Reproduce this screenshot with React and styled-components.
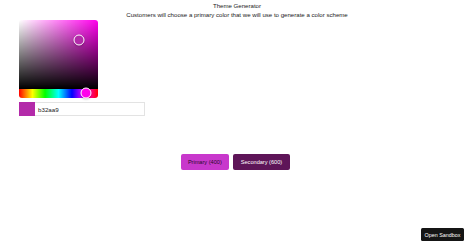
import React from "react";
import styled, { createGlobalStyle } from "styled-components";

const Global = createGlobalStyle`
  html, body { margin: 0; padding: 0; background: #fff; }
  body { font-family: "Liberation Sans", Arial, sans-serif; color: #111; }
`;

const Page = styled.div`
  display: flex;
  flex-direction: column;
  min-height: 248px;
  box-sizing: border-box;
  padding-top: 0.5px;
`;

const Title = styled.div`
  text-align: center;
  font-size: 6.1px;
  line-height: 9px;
  color: #1a1a1a;
`;

const Subtitle = styled(Title)``;

const PickerArea = styled.div`
  display: flex;
  flex-direction: column;
  align-items: flex-start;
  gap: 4px;
  margin: 1px 0 0 19px;
`;

const Picker = styled.div`
  position: relative;
  display: flex;
  flex-direction: column;
  width: 79px;
`;

const Saturation = styled.div`
  position: relative;
  height: 69px;
  border-radius: 3px 3px 0 0;
  background:
    linear-gradient(to top, #000, rgba(0, 0, 0, 0)),
    linear-gradient(to right, #fff, rgba(255, 255, 255, 0)),
    ${(p) => p.$hueColor};
  box-shadow: inset 0 -5px 5px -5px rgba(0, 0, 0, 0.05);
`;

const Hue = styled.div`
  position: relative;
  height: 9.5px;
  border-radius: 0 0 3px 3px;
  background: linear-gradient(
    to right,
    #f00 0%,
    #ff0 17%,
    #0f0 33%,
    #0ff 50%,
    #00f 67%,
    #f0f 83%,
    #f00 100%
  );
`;

const Pointer = styled.div`
  position: absolute;
  width: 11px;
  height: 11px;
  box-sizing: border-box;
  border-radius: 50%;
  border: 1px solid #fff;
  transform: translate(-50%, -50%);
  background: ${(p) => p.$fill};
  box-shadow: 0 1px 2px rgba(0, 0, 0, 0.2);
`;

const HexRow = styled.div`
  display: flex;
  align-items: stretch;
  height: 14px;
`;

const Swatch = styled.div`
  width: 16px;
  background: ${(p) => p.$color};
`;

const HexInput = styled.div`
  width: 110px;
  box-sizing: border-box;
  border: 1px solid #e3e3e3;
  border-left: none;
  display: flex;
  align-items: center;
  padding-left: 3px;
  font-size: 6.2px;
  color: #222;
`;

const ButtonRow = styled.div`
  display: flex;
  justify-content: center;
  gap: 4px;
  margin-top: 38px;
  padding-right: 3px;
`;

const SchemeButton = styled.div`
  height: 16px;
  padding: 0 ${(p) => p.$pad}px;
  display: flex;
  align-items: center;
  border-radius: 2px;
  font-size: 5.6px;
  background: ${(p) => p.$bg};
  color: ${(p) => p.$fg};
  box-sizing: border-box;
`;

const SandboxButton = styled.div`
  position: fixed;
  right: 10px;
  bottom: 7px;
  height: 13px;
  padding: 0 3.5px;
  display: flex;
  align-items: center;
  background: #151515;
  color: #fff;
  font-size: 5.4px;
  border-radius: 1.5px;
`;

export default function App() {
  const color = "#b32aa9";
  const hue = 304.4;
  const s = 0.765;
  const v = 0.702;
  const hueColor = `hsl(${hue}, 100%, 50%)`;
  return (
    <>
      <Global />
      <Page>
        <Title>Theme Generator</Title>
        <Subtitle>Customers will choose a primary color that we will use to generate a color scheme</Subtitle>
        <PickerArea>
          <Picker>
            <Saturation $hueColor={hueColor}>
              <Pointer $fill={color} style={{ left: `${s * 100}%`, top: `${(1 - v) * 100}%` }} />
            </Saturation>
            <Hue>
              <Pointer $fill={hueColor} style={{ left: `${(hue / 360) * 100}%`, top: "50%" }} />
            </Hue>
          </Picker>
          <HexRow>
            <Swatch $color={color} />
            <HexInput>b32aa9</HexInput>
          </HexRow>
        </PickerArea>
        <ButtonRow>
          <SchemeButton $bg="#c838cc" $fg="#2a0a2a" $pad={7}>Primary (400)</SchemeButton>
          <SchemeButton $bg="#5e1558" $fg="#fff" $pad={8}>Secondary (600)</SchemeButton>
        </ButtonRow>
        <SandboxButton>Open Sandbox</SandboxButton>
      </Page>
    </>
  );
}
